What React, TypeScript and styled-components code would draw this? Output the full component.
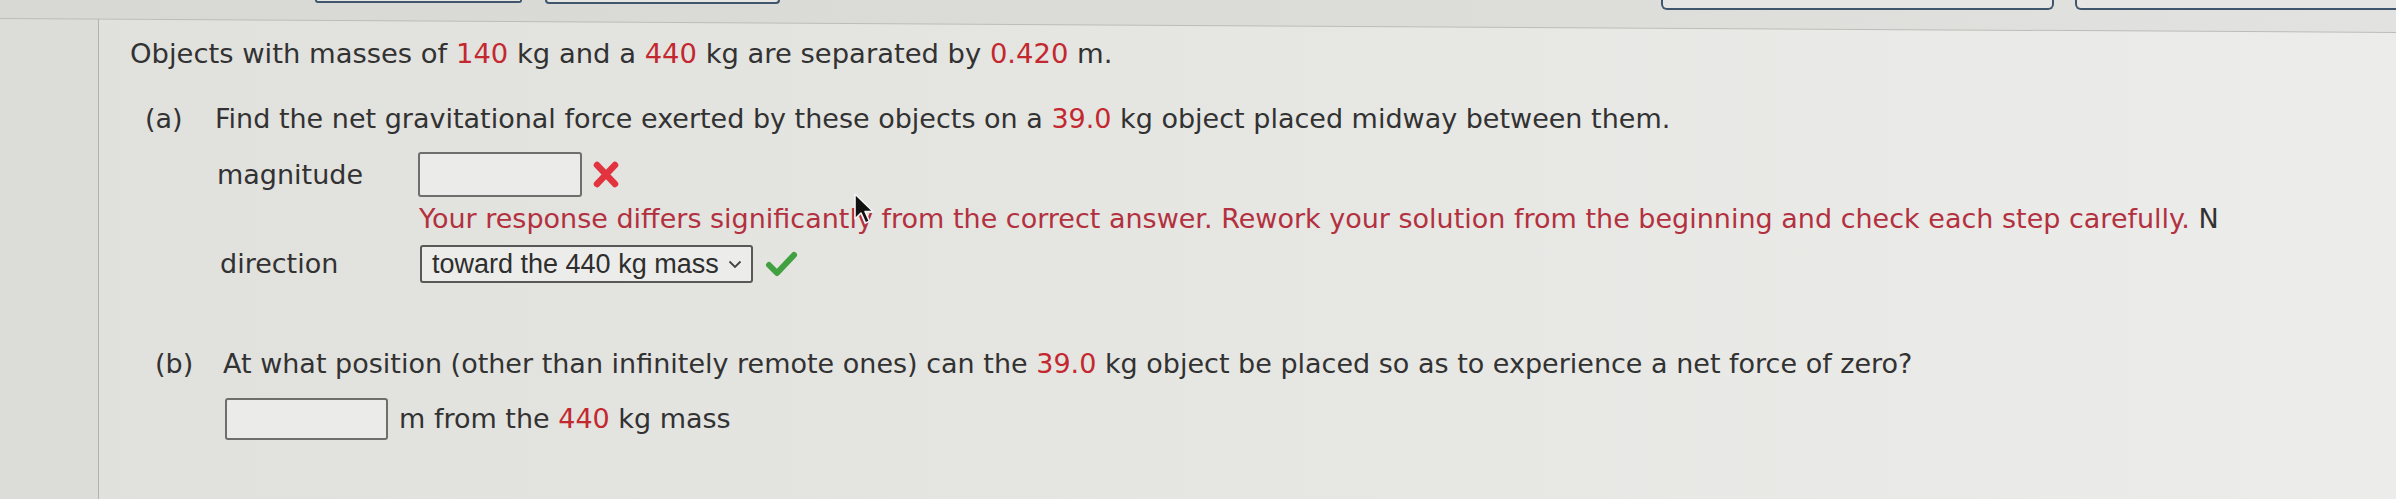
import styled, { createGlobalStyle } from 'styled-components';

const ink = '#323232';
const numRed = '#c4282f';
const feedbackRed = '#b3313f';

const GlobalStyle = createGlobalStyle`
  html, body {
    margin: 0;
    padding: 0;
    background: #e2e2df;
  }
  #root {
    width: 2396px;
    height: 499px;
    overflow: hidden;
  }
`;

const Page = styled.div`
  position: relative;
  width: 2396px;
  height: 499px;
  overflow: hidden;
  display: flex;
  flex-direction: column;
  font-family: 'DejaVu Sans', Verdana, sans-serif;
  color: ${ink};
  background: linear-gradient(90deg, #e0e0dd 0%, #e5e5e2 45%, #ececea 100%);
`;

// the band edge runs slightly downhill to the right in the photo
const TopBar = styled.div`
  height: 33px;
  flex: none;
  background: #bcbcb9;
  clip-path: polygon(0 0, 100% 0, 100% 33px, 0 19px);
`;

const TopBarFill = styled.div`
  height: 32px;
  display: flex;
  align-items: flex-start;
  background: linear-gradient(90deg, #d8d8d5 0%, #dcdcd9 60%, #e2e2e0 100%);
  clip-path: polygon(0 0, 100% 0, 100% 32px, 0 18px);
`;

const TabButton = styled.div<{ $left: number; $width: number; $drop: number }>`
  flex: none;
  margin-left: ${(p) => p.$left}px;
  width: ${(p) => p.$width}px;
  height: ${(p) => p.$drop}px;
  box-sizing: border-box;
  border: 2px solid #3f566d;
  border-top: 0;
  border-radius: 0 0 6px 6px;
  background: #e6e6e4;
`;

const Main = styled.div`
  flex: 1;
  display: flex;
  margin-top: -14px;
`;

const Gutter = styled.div`
  width: 98px;
  flex: none;
  background: #dcdcd9;
  border-right: 1px solid #b2b2af;
`;

const Content = styled.div`
  flex: 1;
  padding-top: 19px;
  font-size: 27px;
  line-height: 32px;
`;

const Intro = styled.div`
  margin-left: 31px;
  font-size: 27.4px;
  white-space: nowrap;
`;

const Num = styled.span`
  color: ${numRed};
`;

const Part = styled.div<{ $indent: number; $top: number }>`
  display: flex;
  margin-left: ${(p) => p.$indent}px;
  margin-top: ${(p) => p.$top}px;
  white-space: nowrap;
`;

const PartLabel = styled.div<{ $width: number }>`
  width: ${(p) => p.$width}px;
  flex: none;
`;

const AnswerRow = styled.div<{ $indent: number; $top: number }>`
  display: flex;
  align-items: center;
  margin-left: ${(p) => p.$indent}px;
  margin-top: ${(p) => p.$top}px;
  white-space: nowrap;
`;

const FieldLabel = styled.div<{ $width: number }>`
  width: ${(p) => p.$width}px;
  flex: none;
`;

const AnswerBox = styled.input<{ $width: number; $height: number }>`
  width: ${(p) => p.$width}px;
  height: ${(p) => p.$height}px;
  box-sizing: border-box;
  margin: 0;
  border: 2px solid #6e6e6c;
  border-radius: 3px;
  background: #ebebe9;
  outline: none;
`;

const Mark = styled.svg<{ $gap: number }>`
  flex: none;
  margin-left: ${(p) => p.$gap}px;
`;

const Feedback = styled.div`
  margin-left: 320px;
  margin-top: 6px;
  color: ${feedbackRed};
  white-space: nowrap;
`;

const Unit = styled.span`
  color: ${ink};
`;

const SelectBox = styled.div`
  width: 333px;
  height: 38px;
  box-sizing: border-box;
  display: flex;
  align-items: center;
  justify-content: space-between;
  padding: 0 9px 0 10px;
  border: 2px solid #585856;
  border-radius: 3px;
  background: #ececea;
  font-family: 'Liberation Sans', Arial, sans-serif;
  font-size: 27px;
  color: #2e2e2e;
`;

const Suffix = styled.div`
  margin-left: 11px;
`;

const Cursor = styled.svg`
  position: absolute;
  left: 853px;
  top: 192px;
`;

function App() {
  return (
    <>
      <GlobalStyle />
      <Page>
        <TopBar>
          <TopBarFill>
            <TabButton $left={315} $width={207} $drop={3} />
            <TabButton $left={23} $width={235} $drop={4} />
            <TabButton $left={881} $width={393} $drop={10} />
            <TabButton $left={21} $width={340} $drop={10} />
          </TopBarFill>
        </TopBar>
        <Main>
          <Gutter />
          <Content>
            <Intro>
              Objects with masses of <Num>140</Num> kg and a <Num>440</Num> kg are separated by{' '}
              <Num>0.420</Num> m.
            </Intro>

            <Part $indent={46} $top={33}>
              <PartLabel $width={70}>(a)</PartLabel>
              <div>
                Find the net gravitational force exerted by these objects on a <Num>39.0</Num> kg
                object placed midway between them.
              </div>
            </Part>

            <AnswerRow $indent={118} $top={17}>
              <FieldLabel $width={201}>magnitude</FieldLabel>
              <AnswerBox $width={164} $height={45} />
              <Mark $gap={10} width="28" height="27" viewBox="0 0 28 27">
                <path d="M5 4 L23 23 M23 4 L5 23" stroke="#e1343f" strokeWidth="6.5" strokeLinecap="round" />
              </Mark>
            </AnswerRow>

            <Feedback>
              Your response differs significantly from the correct answer. Rework your solution from the
              beginning and check each step carefully. <Unit>N</Unit>
            </Feedback>

            <AnswerRow $indent={121} $top={10}>
              <FieldLabel $width={200}>direction</FieldLabel>
              <SelectBox>
                <span>toward the 440 kg mass</span>
                <svg width="14" height="9" viewBox="0 0 14 9">
                  <polyline points="1.5,1.5 7,7 12.5,1.5" fill="none" stroke="#444" strokeWidth="1.8" />
                </svg>
              </SelectBox>
              <Mark $gap={12} width="33" height="28" viewBox="0 0 33 28">
                <polyline
                  points="4,15 12,23 29,5"
                  fill="none"
                  stroke="#41a040"
                  strokeWidth="6"
                  strokeLinecap="round"
                  strokeLinejoin="round"
                />
              </Mark>
            </AnswerRow>

            <Part $indent={56} $top={65}>
              <PartLabel $width={68}>(b)</PartLabel>
              <div>
                At what position (other than infinitely remote ones) can the <Num>39.0</Num> kg object be
                placed so as to experience a net force of zero?
              </div>
            </Part>

            <AnswerRow $indent={126} $top={18}>
              <AnswerBox $width={163} $height={42} />
              <Suffix>
                m from the <Num>440</Num> kg mass
              </Suffix>
            </AnswerRow>
          </Content>
        </Main>
        <Cursor width="24" height="36" viewBox="0 0 24 36">
          <path
            d="M2 2 L2 27 L8 21 L12.5 31 L16.5 29.3 L12 19.5 L20 19.5 Z"
            fill="#111"
            stroke="#f4f4f4"
            strokeWidth="1.6"
            strokeLinejoin="round"
          />
        </Cursor>
      </Page>
    </>
  );
}

export default App;
